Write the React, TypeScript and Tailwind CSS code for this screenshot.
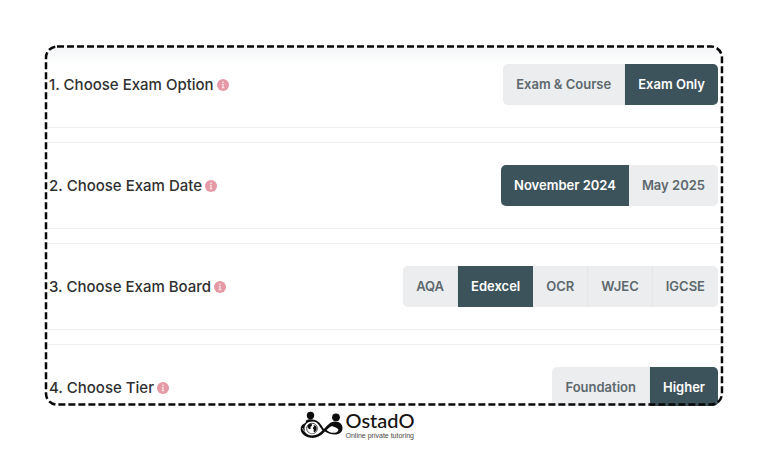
import { useId, useState } from "react";

type Step = { title: string; options: string[]; initial: string };

const steps: Step[] = [
  { title: "1. Choose Exam Option", options: ["Exam & Course", "Exam Only"], initial: "Exam Only" },
  { title: "2. Choose Exam Date", options: ["November 2024", "May 2025"], initial: "November 2024" },
  { title: "3. Choose Exam Board", options: ["AQA", "Edexcel", "OCR", "WJEC", "IGCSE"], initial: "Edexcel" },
  { title: "4. Choose Tier", options: ["Foundation", "Higher"], initial: "Higher" },
];

function InfoIcon() {
  return (
    <svg className="size-3 shrink-0" viewBox="0 0 12 12" aria-hidden="true">
      <circle cx="6" cy="6" r="6" fill="#e599a5" />
      <circle cx="6" cy="3.3" r="0.9" fill="#fbe6ea" />
      <path d="M4.800 5h1.800v3.300h.8v.9H4.600v-.9h.8V5.900h-.6z" fill="#fbe6ea" />
    </svg>
  );
}

function StepRow({ title, options, initial }: Step) {
  const [selected, setSelected] = useState(initial);
  const id = useId();
  return (
    <section className="flex h-[87px] shrink-0 items-center justify-between border-y border-[#f0f1f2] pr-[5px] pl-1">
      <h2 id={id} className="flex items-center gap-[3px] text-[15px] leading-5 font-medium text-[#303030]">
        {title}
        <InfoIcon />
      </h2>
      <div role="group" aria-labelledby={id} className="flex overflow-hidden rounded-[5px] bg-[#ebedef]">
        {options.map((option) => (
          <button
            key={option}
            type="button"
            aria-pressed={option === selected}
            onClick={() => setSelected(option)}
            className={
              option === selected
                ? "h-[41px] bg-[#3d535b] px-[13px] text-[13px] font-semibold text-white"
                : "h-[41px] border-r border-[#e4e7e9] px-[13px] text-[13px] font-semibold text-[#5d686d] last:border-r-0"
            }
          >
            {option}
          </button>
        ))}
      </div>
    </section>
  );
}

function Logo() {
  return (
    <div className="flex items-start gap-[3px]">
      <svg className="mt-[3px] h-7 w-[43px]" viewBox="0 0 43 28" aria-hidden="true">
        <g fill="#0d0d0d">
          <circle cx="10.500" cy="4.500" r="3.700" />
          <circle cx="36" cy="6.300" r="3.900" />
          <path
            fillRule="evenodd"
            d="M6 9.500C9 7.500 15 8 18.500 11C22 14 22.500 16.500 24 18C27 15 30 10.500 35 10.500C40 10.500 42.500 13.500 42.500 17C42.500 21 39.500 23.500 35 23.500C31 23.500 28 22.500 25 20.500C21 25 16 27.500 10.500 26.800C4 26 .3 21.500 .7 17.500C1 14 3.500 12.800 5.500 12ZM12.500 10.500C7 10.500 4.500 14 4.500 17.500C4.500 21.500 7.500 24.500 12 24.500C16.500 24.500 20 22 22.500 19.200C20 17.500 19 10.500 12.500 10.500ZM26.500 19C29 21.500 32 22 35 21.800C37.500 21.500 39 19.500 38 18C36.500 16 34 16.500 32 15C30 16 28 17.500 26.500 19Z"
          />
          <path d="M8 14c2-2 4-1.500 4 0s-2 1.500-1.500 3-1 1.500-2 .5S7 15.500 8 14zM13.500 14c2 .3 3.500 2 3.200 4s-1.700 3-2.700 3.200c-1-1 .3-2-.5-3s-1-2 .5-2.200z" />
        </g>
        <circle cx="12" cy="17.500" r="5.300" fill="none" stroke="#333" strokeWidth="0.900" />
        <path d="M2.500 17C4 22 9 23.500 14 23" fill="none" stroke="#fff" strokeWidth="0.700" />
      </svg>
      <div className="text-[#15110f]">
        <p className="font-['Lato',sans-serif] text-[20px] leading-6 font-medium">OstadO</p>
        <p className="font-['Liberation_Sans',sans-serif] text-[7px] leading-2 text-[#4a4644]">Online private tutoring</p>
      </div>
    </div>
  );
}

export default function App() {
  return (
    <main className="bg-white px-[45px] pt-[45px] font-['Inter',sans-serif]">
      <div className="relative">
        <div className="flex h-[361px] flex-col gap-[14px] overflow-hidden rounded-[12px] bg-linear-to-b from-[#f2f4f6] to-white to-[20px] [&>section:first-child]:-mt-[4px]">
          {steps.map((step) => (
            <StepRow key={step.title} {...step} />
          ))}
        </div>
        <svg className="pointer-events-none absolute inset-0 size-full overflow-visible" aria-hidden="true">
          <rect x="1" y="1.500" width="99.700%" height="99.200%" rx="11" fill="none" stroke="#080808" strokeWidth="2.500" strokeDasharray="7 3" />
        </svg>
      </div>
      <footer className="flex justify-center pt-0.5 pr-[54px]">
        <Logo />
      </footer>
    </main>
  );
}
